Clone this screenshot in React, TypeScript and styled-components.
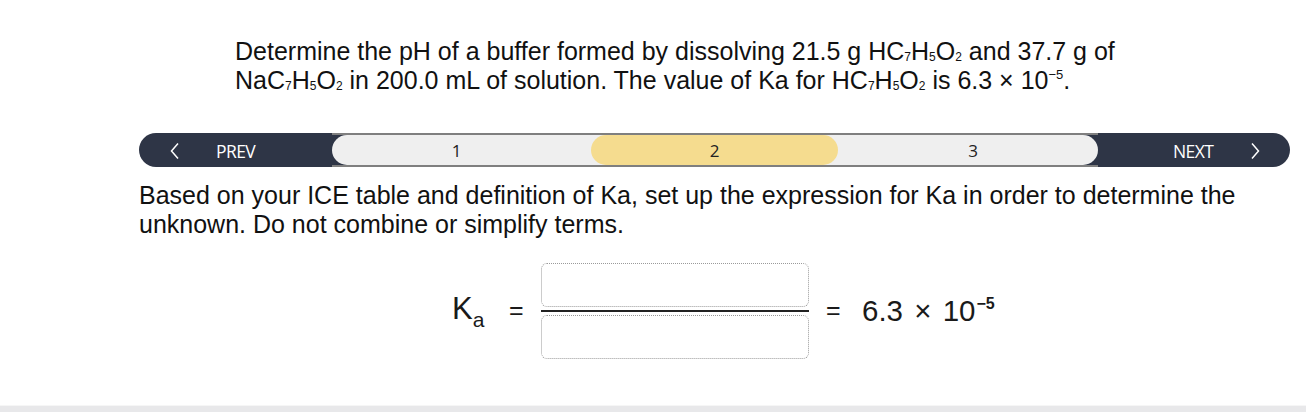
import React from "react";
import styled, { createGlobalStyle } from "styled-components";

const Global = createGlobalStyle`
  html, body { margin: 0; padding: 0; background: #ffffff; }
  body { font-family: "Liberation Sans", Arial, sans-serif; color: #1a1a1a; }
`;

const Page = styled.div`
  width: 1306px;
  height: 412px;
  position: relative;
  overflow: hidden;
  display: flex;
  flex-direction: column;
`;

const Content = styled.div`
  padding: 37px 16px 0 139px;
  flex: 1;
`;

const Question = styled.p`
  margin: 0 0 38px 96px;
  font-size: 25px;
  line-height: 29px;
  color: #111;
`;

const Sub = styled.sub`
  font-size: 12px;
  vertical-align: -1px;
  line-height: 0;
`;

const Sup = styled.sup`
  font-size: 13px;
  vertical-align: 10px;
  line-height: 0;
`;

const Nav = styled.div`
  width: 1151px;
  height: 34px;
  background: #2e3546;
  border-radius: 17px;
  display: flex;
  align-items: center;
  font-family: "Open Sans", "Noto Sans", sans-serif;
`;

const NavBtn = styled.div<{ $side: "left" | "right" }>`
  width: ${(p) => (p.$side === "left" ? 193 : 192)}px;
  height: 34px;
  display: flex;
  align-items: center;
  color: #ffffff;
  font-size: 17.5px;
  letter-spacing: -0.6px;
  box-sizing: border-box;
  padding: ${(p) => (p.$side === "left" ? "1px 0 0 30px" : "1px 0 0 75px")};
`;

const Chevron = styled.svg<{ $ml?: number }>`
  width: 12px;
  height: 18px;
  flex: none;
  margin-left: ${(p) => p.$ml ?? 0}px;
`;

const NavLabel = styled.span<{ $gap: number }>`
  margin: 0 ${(p) => p.$gap}px;
`;

const Track = styled.div`
  width: 766px;
  height: 30px;
  border-top: 2px solid #7f7f7f;
  border-bottom: 2px solid #7f7f7f;
  background: #2e3546;
`;

const TrackInner = styled.div`
  height: 30px;
  background: #efefef;
  border-radius: 15px;
  display: flex;
`;

const Step = styled.div<{ $active?: boolean; $w: number; $shift: number }>`
  width: ${(p) => p.$w}px;
  height: 30px;
  display: flex;
  align-items: center;
  justify-content: center;
  box-sizing: border-box;
  padding-left: ${(p) => (p.$shift > 0 ? p.$shift * 2 : 0)}px;
  padding-right: ${(p) => (p.$shift < 0 ? -p.$shift * 2 : 0)}px;
  border-radius: 15px;
  background: ${(p) => (p.$active ? "#f5dc8f" : "transparent")};
  color: #222;
  font-size: 17px;
`;

const Prompt = styled.p`
  margin: 14px 0 0 0;
  font-size: 25px;
  line-height: 29px;
  color: #111;
`;

const Equation = styled.div`
  display: flex;
  align-items: center;
  margin: 24px 0 0 313px;
  color: #1a1a1a;
`;

const KSymbol = styled.span`
  font-size: 31px;
  width: 57px;
`;

const KSub = styled.span`
  font-size: 21px;
  vertical-align: -8px;
`;

const Equals = styled.span<{ $w: number; $ml?: number }>`
  width: ${(p) => p.$w}px;
  margin-left: ${(p) => p.$ml ?? 0}px;
  font-size: 25px;
  margin-top: -2px;
`;

const Fraction = styled.div`
  width: 268px;
  display: flex;
  flex-direction: column;
  align-items: stretch;
`;

const InputBox = styled.div`
  height: 44px;
  border: 1px dotted #9a9a9a;
  border-radius: 6px;
  box-sizing: border-box;
  background: #fff;
`;

const FracLine = styled.div`
  height: 2px;
  background: #222;
  margin: 3px 0 3px 0;
`;

const Value = styled.span`
  font-size: 29.5px;
  word-spacing: 3px;
`;

const ValSup = styled.sup`
  font-size: 16px;
  vertical-align: 12px;
  line-height: 0;
  font-weight: bold;
  margin-left: 1px;
`;

const Footer = styled.div`
  height: 6px;
  background: #e8e8ea;
  border-top: 1px solid #f6f6f6;
`;

export default function App() {
  return (
    <Page>
      <Global />
      <Content>
        <Question>
          Determine the pH of a buffer formed by dissolving 21.5 g HC<Sub>7</Sub>H<Sub>5</Sub>O<Sub>2</Sub> and 37.7 g of
          <br />
          NaC<Sub>7</Sub>H<Sub>5</Sub>O<Sub>2</Sub> in 200.0 mL of solution. The value of Ka for HC<Sub>7</Sub>H<Sub>5</Sub>O<Sub>2</Sub> is 6.3 × 10<Sup>−5</Sup>.
        </Question>
        <Nav>
          <NavBtn $side="left">
            <Chevron viewBox="0 0 12 18">
              <path d="M9 1.5 L2.5 9 L9 16.5" fill="none" stroke="#fff" strokeWidth="1.5" />
            </Chevron>
            <NavLabel $gap={35}>PREV</NavLabel>
          </NavBtn>
          <Track>
            <TrackInner>
              <Step $w={259} $shift={-5}>1</Step>
              <Step $w={247} $active $shift={0}>2</Step>
              <Step $w={260} $shift={5}>3</Step>
            </TrackInner>
          </Track>
          <NavBtn $side="right">
            <NavLabel $gap={0}>NEXT</NavLabel>
            <Chevron viewBox="0 0 12 18" $ml={36}>
              <path d="M3 1.5 L9.5 9 L3 16.5" fill="none" stroke="#fff" strokeWidth="1.5" />
            </Chevron>
          </NavBtn>
        </Nav>
        <Prompt>
          Based on your ICE table and definition of Ka, set up the expression for Ka in order to determine the
          <br />
          unknown. Do not combine or simplify terms.
        </Prompt>
        <Equation>
          <KSymbol>
            K<KSub>a</KSub>
          </KSymbol>
          <Equals $w={32}>=</Equals>
          <Fraction>
            <InputBox />
            <FracLine />
            <InputBox />
          </Fraction>
          <Equals $w={36} $ml={17}>=</Equals>
          <Value>
            6.3 × 10<ValSup>−5</ValSup>
          </Value>
        </Equation>
      </Content>
      <Footer />
    </Page>
  );
}
